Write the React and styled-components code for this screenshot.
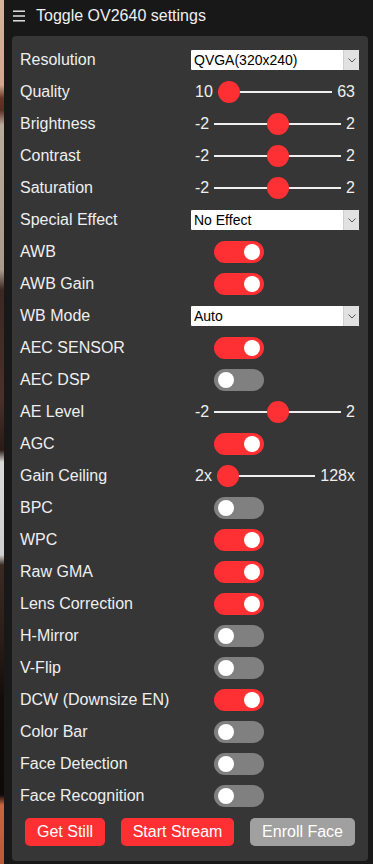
import React from "react";
import styled, { createGlobalStyle } from "styled-components";

const GlobalStyle = createGlobalStyle`
  html, body { margin: 0; padding: 0; background: #181818; }
  body {
    font-family: "Liberation Sans", Arial, Helvetica, sans-serif;
    color: #efefef;
    font-size: 16px;
  }
  * { box-sizing: border-box; }
`;

const Page = styled.div`
  display: flex;
  min-height: 864px;
  background: #181818;
`;

const PhotoStrip = styled.div`
  width: 4px;
  flex: 0 0 4px;
  background: linear-gradient(
    to bottom,
    #d6b39b 0px,
    #cfa88f 85px,
    #6a3426 98px,
    #5a2c22 110px,
    #b9ab9c 125px,
    #a99a8a 270px,
    #3d2722 290px,
    #4a302a 400px,
    #2a1a16 450px,
    #d9d9d9 462px,
    #cfcfcf 555px,
    #3a2a22 565px,
    #2b1d18 640px,
    #110c0a 700px,
    #0e0a09 795px,
    #c8653e 805px,
    #b95a36 864px
  );
`;

const Main = styled.section`
  display: flex;
  flex-direction: column;
  padding-left: 8px;
`;

const Header = styled.label`
  display: flex;
  align-items: flex-start;
  height: 36px;
  padding: 7px 0 0 1px;
  line-height: 18px;
  color: #efefef;
  cursor: pointer;
`;

const MenuIcon = styled.svg`
  width: 12px;
  height: 12px;
  margin: 3px 11px 0 0;
  flex: 0 0 auto;
`;

const Menu = styled.div`
  display: flex;
  flex-direction: column;
  width: 356px;
  background: #363636;
  padding: 8px 8px 10px;
  border-radius: 4px;
`;

const InputGroup = styled.div`
  display: flex;
  flex-wrap: nowrap;
  align-items: center;
  line-height: 22px;
  height: 22px;
  margin: 5px 0;
`;

const Label = styled.label`
  display: inline-block;
  width: 170px;
  flex: 0 0 170px;
  padding-right: 10px;
  white-space: nowrap;
`;

const SelectWrap = styled.div`
  position: relative;
  flex-grow: 1;
  height: 22px;
  border: 1px solid #363636;
  background: #ffffff;
  border-radius: 2px;
`;

const Select = styled.select`
  appearance: none;
  -webkit-appearance: none;
  width: 100%;
  height: 20px;
  border: 0;
  outline: 0;
  background: transparent;
  font-family: "Liberation Sans", Arial, sans-serif;
  font-size: 14px;
  color: #000;
  padding: 0 0 0 3px;
  margin: 0;
  display: block;
`;

const SelectArrow = styled.span`
  position: absolute;
  top: 0;
  right: 0;
  width: 16px;
  height: 20px;
  background: #e1e1e1;
  border-left: 1px solid #cfcfcf;
  display: flex;
  align-items: center;
  justify-content: center;
  pointer-events: none;
`;

const RangeLabel = styled.span`
  display: inline-block;
  padding: 0 5px;
  flex: 0 0 auto;
`;

const Range = styled.input`
  -webkit-appearance: none;
  appearance: none;
  flex-grow: 1;
  width: 100%;
  min-width: 0;
  height: 22px;
  background: #363636;
  cursor: pointer;
  margin: 0;

  &::-webkit-slider-runnable-track {
    width: 100%;
    height: 2px;
    background: #efefef;
    border: 0;
  }
  &::-webkit-slider-thumb {
    -webkit-appearance: none;
    border: 1px solid rgba(0, 0, 30, 0);
    height: 22px;
    width: 22px;
    border-radius: 50px;
    background: #ff3034;
    margin-top: -10px;
  }
  &:focus { outline: none; }
`;

const Switch = styled.span`
  display: block;
  position: relative;
  width: 50px;
  height: 22px;
  margin-left: 24px;
  border-radius: 22px;
  cursor: pointer;
  background-color: ${(p) => (p.$on ? "#ff3034" : "#808080")};

  &::before {
    content: "";
    position: absolute;
    left: 4px;
    top: 3px;
    width: 16px;
    height: 16px;
    border-radius: 50%;
    background: #fff;
    transform: translateX(${(p) => (p.$on ? "26px" : "0")});
  }
`;

const Buttons = styled.section`
  display: flex;
  flex-wrap: nowrap;
  justify-content: space-between;
  margin-top: 1px;
`;

const Button = styled.button`
  display: block;
  margin: 5px;
  padding: 0 12px;
  border: 0;
  line-height: 28px;
  cursor: pointer;
  color: #fff;
  background: ${(p) => (p.$disabled ? "#a0a0a0" : "#ff3034")};
  border-radius: 5px;
  font-family: "Liberation Sans", Arial, sans-serif;
  font-size: 16px;
  outline: 0;
`;

const SelectRow = ({ label, value }) => (
  <InputGroup>
    <Label>{label}</Label>
    <SelectWrap>
      <Select defaultValue={value}>
        <option value={value}>{value}</option>
      </Select>
      <SelectArrow>
        <svg width="8" height="5" viewBox="0 0 8 5">
          <path d="M0.5 0.5 L4 4 L7.5 0.5" fill="none" stroke="#555" strokeWidth="1" />
        </svg>
      </SelectArrow>
    </SelectWrap>
  </InputGroup>
);

const RangeRow = ({ label, minLabel, maxLabel, min, max, value }) => (
  <InputGroup>
    <Label>{label}</Label>
    <RangeLabel>{minLabel}</RangeLabel>
    <Range type="range" min={min} max={max} defaultValue={value} />
    <RangeLabel>{maxLabel}</RangeLabel>
  </InputGroup>
);

const SwitchRow = ({ label, on }) => (
  <InputGroup>
    <Label>{label}</Label>
    <Switch $on={on} />
  </InputGroup>
);

const rows = [
  { t: "select", label: "Resolution", value: "QVGA(320x240)" },
  { t: "range", label: "Quality", minLabel: "10", maxLabel: "63", min: 10, max: 63, value: 10 },
  { t: "range", label: "Brightness", minLabel: "-2", maxLabel: "2", min: -2, max: 2, value: 0 },
  { t: "range", label: "Contrast", minLabel: "-2", maxLabel: "2", min: -2, max: 2, value: 0 },
  { t: "range", label: "Saturation", minLabel: "-2", maxLabel: "2", min: -2, max: 2, value: 0 },
  { t: "select", label: "Special Effect", value: "No Effect" },
  { t: "switch", label: "AWB", on: true },
  { t: "switch", label: "AWB Gain", on: true },
  { t: "select", label: "WB Mode", value: "Auto" },
  { t: "switch", label: "AEC SENSOR", on: true },
  { t: "switch", label: "AEC DSP", on: false },
  { t: "range", label: "AE Level", minLabel: "-2", maxLabel: "2", min: -2, max: 2, value: 0 },
  { t: "switch", label: "AGC", on: true },
  { t: "range", label: "Gain Ceiling", minLabel: "2x", maxLabel: "128x", min: 0, max: 6, value: 0 },
  { t: "switch", label: "BPC", on: false },
  { t: "switch", label: "WPC", on: true },
  { t: "switch", label: "Raw GMA", on: true },
  { t: "switch", label: "Lens Correction", on: true },
  { t: "switch", label: "H-Mirror", on: false },
  { t: "switch", label: "V-Flip", on: false },
  { t: "switch", label: "DCW (Downsize EN)", on: true },
  { t: "switch", label: "Color Bar", on: false },
  { t: "switch", label: "Face Detection", on: false },
  { t: "switch", label: "Face Recognition", on: false },
];

export default function App() {
  return (
    <>
      <GlobalStyle />
      <Page>
        <PhotoStrip />
        <Main>
          <Header>
            <MenuIcon viewBox="0 0 12 12">
              <rect x="0" y="0.5" width="12" height="1.4" fill="#efefef" />
              <rect x="0" y="5.3" width="12" height="1.4" fill="#efefef" />
              <rect x="0" y="10.1" width="12" height="1.4" fill="#efefef" />
            </MenuIcon>
            Toggle OV2640 settings
          </Header>
          <Menu>
            {rows.map((r) =>
              r.t === "select" ? (
                <SelectRow key={r.label} label={r.label} value={r.value} />
              ) : r.t === "range" ? (
                <RangeRow key={r.label} {...r} />
              ) : (
                <SwitchRow key={r.label} label={r.label} on={r.on} />
              )
            )}
            <Buttons>
              <Button>Get Still</Button>
              <Button>Start Stream</Button>
              <Button $disabled>Enroll Face</Button>
            </Buttons>
          </Menu>
        </Main>
      </Page>
    </>
  );
}
